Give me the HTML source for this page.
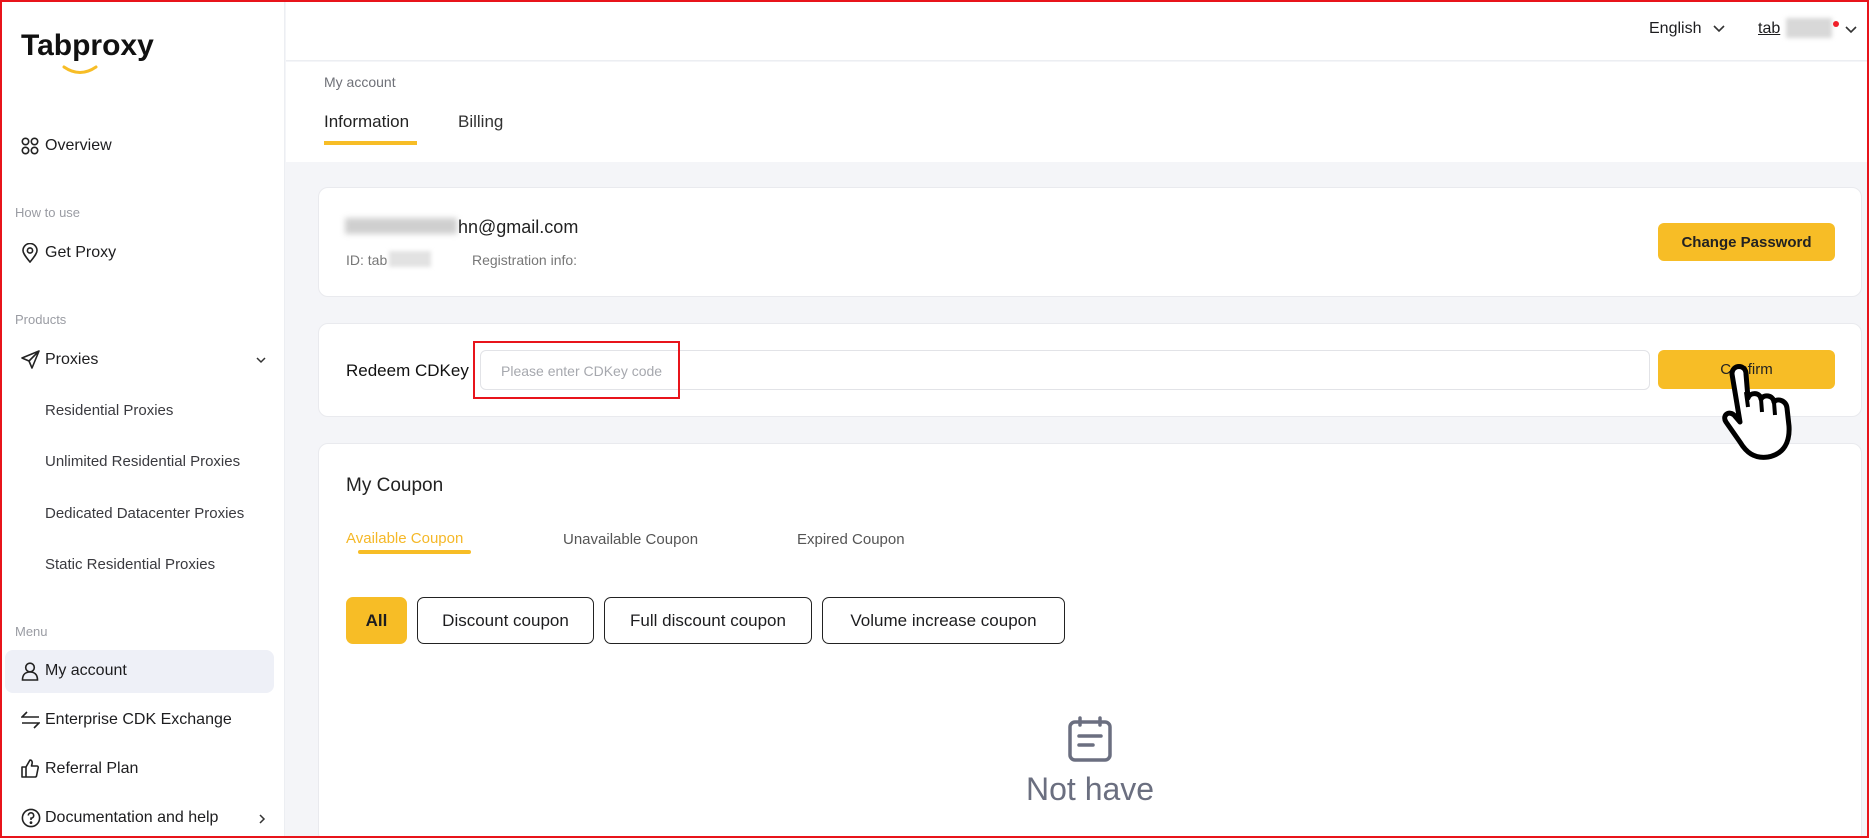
<!DOCTYPE html>
<html><head><meta charset="utf-8"><style>
*{box-sizing:border-box;margin:0;padding:0}
html{width:1869px;height:838px;overflow:hidden}
body{width:1869px;height:838px;overflow:hidden;font-family:"Liberation Sans",sans-serif;color:#1d1d1f;background:#f4f5f8;position:relative}
.frame{position:absolute;left:0;top:0;width:1869px;height:838px;border:2px solid #e8141b;z-index:50;pointer-events:none}
.side{position:absolute;left:0;top:0;width:285px;height:838px;background:#fff;border-right:1px solid #eceef2}
.a{position:absolute;white-space:nowrap}
.nav{font-size:16px;color:#1d1d1f;left:45px}
.sub{font-size:15px;color:#3a3a3f;left:45px}
.lbl{font-size:13px;color:#9a9ca3;left:15px}
.ic{position:absolute;left:21px}
.top{position:absolute;left:286px;top:0;right:0;height:61px;background:#fff;border-bottom:1px solid #eceef2}
.head{position:absolute;left:286px;top:62px;right:0;height:100px;background:#fff}
.card{position:absolute;left:318px;width:1544px;background:#fff;border-radius:10px;border:1px solid #e9eaee}
.btn{position:absolute;background:#f7bd26;border-radius:6px;font-size:15px;font-weight:bold;color:#222;display:flex;align-items:center;justify-content:center}
.fb{position:absolute;top:597px;height:47px;border:1px solid #222;border-radius:7px;font-size:17px;display:flex;align-items:center;justify-content:center;background:#fff}
</style></head><body>
<div class="frame"></div>
<div class="side">
 <div class="a" style="left:21px;top:29px;font-size:30px;font-weight:bold;color:#111">Tabproxy</div>
 <svg class="a" style="left:60px;top:64px" width="40" height="12"><path d="M4 3 Q20 14 36 3" stroke="#f7bd26" stroke-width="3" fill="none" stroke-linecap="round"/></svg>
 <svg class="ic" style="top:137px" width="18" height="18" fill="none" stroke="#222" stroke-width="1.6"><circle cx="4.5" cy="4.5" r="3.2"/><circle cx="13.5" cy="4.5" r="3.2"/><circle cx="4.5" cy="13.5" r="3.2"/><circle cx="13.5" cy="13.5" r="3.2"/></svg>
 <div class="a nav" style="top:137px">Overview</div>
 <div class="a lbl" style="top:205px">How to use</div>
 <svg class="ic" style="top:243px" width="18" height="20" fill="none" stroke="#222" stroke-width="1.6"><path d="M9 19 C4 13 2 10 2 7.5 A7 7 0 0 1 16 7.5 C16 10 14 13 9 19Z"/><circle cx="9" cy="7.5" r="2.6"/></svg>
 <div class="a nav" style="top:244px">Get Proxy</div>
 <div class="a lbl" style="top:312px">Products</div>
 <svg class="ic" style="top:350px" width="19" height="19" fill="none" stroke="#222" stroke-width="1.6" stroke-linejoin="round"><path d="M18 1 L1 8 L8 11 L11 18 Z M8 11 L18 1"/></svg>
 <div class="a nav" style="top:351px">Proxies</div>
 <svg class="a" style="left:256px;top:356px" width="10" height="8" fill="none" stroke="#333" stroke-width="1.5"><path d="M1 2 L5 6 L9 2"/></svg>
 <div class="a sub" style="top:402px">Residential Proxies</div>
 <div class="a sub" style="top:453px">Unlimited Residential Proxies</div>
 <div class="a sub" style="top:505px">Dedicated Datacenter Proxies</div>
 <div class="a sub" style="top:556px">Static Residential Proxies</div>
 <div class="a lbl" style="top:624px">Menu</div>
 <div class="a" style="left:5px;top:650px;width:269px;height:43px;background:#eef0f7;border-radius:8px"></div>
 <svg class="ic" style="top:662px" width="18" height="19" fill="none" stroke="#222" stroke-width="1.6"><circle cx="9" cy="5.5" r="4.3"/><path d="M1.5 18 C1.5 12 5 10 9 10 C13 10 16.5 12 16.5 18 Z"/></svg>
 <div class="a nav" style="top:662px">My account</div>
 <svg class="ic" style="top:711px" width="19" height="18" fill="none" stroke="#222" stroke-width="1.6"><path d="M6 1 L1 6 H18 M13 17 L18 12 H1"/></svg>
 <div class="a nav" style="top:711px">Enterprise CDK Exchange</div>
 <svg class="ic" style="top:759px" width="18" height="19" fill="none" stroke="#222" stroke-width="1.6" stroke-linejoin="round"><path d="M1 8 H5 V18 H1 Z M5 8 L9 1 C11 1 11.5 3 11 5 L10.5 7 H16 C17 7 17.5 8 17 9.5 L15.5 17 C15.3 17.7 14.8 18 14 18 H5"/></svg>
 <div class="a nav" style="top:760px">Referral Plan</div>
 <svg class="ic" style="top:808px" width="20" height="20" fill="none" stroke="#222" stroke-width="1.6"><circle cx="10" cy="10" r="8.6"/><path d="M7.3 7.5 A2.7 2.7 0 1 1 10 10.2 V12"/><circle cx="10" cy="14.6" r=".6" fill="#222"/></svg>
 <div class="a nav" style="top:809px">Documentation and help</div>
 <svg class="a" style="left:258px;top:814px" width="8" height="10" fill="none" stroke="#333" stroke-width="1.5"><path d="M2 1 L6 5 L2 9"/></svg>
</div>
<div class="top">
 <div class="a" style="left:1363px;top:20px;font-size:16px">English</div>
 <svg class="a" style="left:1427px;top:25px" width="12" height="8" fill="none" stroke="#333" stroke-width="1.6"><path d="M1 1 L6 6 L11 1"/></svg>
 <div class="a" style="left:1472px;top:20px;font-size:16px;text-decoration:underline">tab</div>
 <div class="a" style="left:1500px;top:18px;width:46px;height:20px;background:#d8d8d8;filter:blur(2px)"></div>
 <div class="a" style="left:1547px;top:21px;width:6px;height:6px;border-radius:50%;background:#f0202a"></div>
 <svg class="a" style="left:1559px;top:26px" width="12" height="8" fill="none" stroke="#333" stroke-width="1.6"><path d="M1 1 L6 6 L11 1"/></svg>
</div>
<div class="head">
 <div class="a" style="left:38px;top:12px;font-size:14px;color:#6f7178">My account</div>
 <div class="a" style="left:38px;top:50px;font-size:17px;color:#222">Information</div>
 <div class="a" style="left:38px;top:79px;width:93px;height:4px;background:#f7bd26"></div>
 <div class="a" style="left:172px;top:50px;font-size:17px;color:#333">Billing</div>
</div>
<div class="card" style="top:187px;height:110px">
 <div class="a" style="left:26px;top:30px;width:112px;height:16px;background:#cfcfcf;filter:blur(3px)"></div>
 <div class="a" style="left:139px;top:29px;font-size:18px;color:#222">hn@gmail.com</div>
 <div class="a" style="left:27px;top:64px;font-size:14px;color:#777">ID: tab</div>
 <div class="a" style="left:70px;top:63px;width:42px;height:16px;background:#e2e2e2;filter:blur(2px)"></div>
 <div class="a" style="left:153px;top:64px;font-size:14px;color:#777">Registration info:</div>
</div>
<div class="btn" style="left:1658px;top:223px;width:177px;height:38px">Change Password</div>
<div class="card" style="top:323px;height:94px">
 <div class="a" style="left:27px;top:37px;font-size:17px;color:#111">Redeem CDKey</div>
 <div class="a" style="left:161px;top:26px;width:1170px;height:40px;border:1px solid #e2e3e7;border-radius:6px"></div>
 <div class="a" style="left:182px;top:39px;font-size:14px;color:#a6a8ae">Please enter CDKey code</div>
 <div class="a" style="left:154px;top:17px;width:207px;height:58px;border:2px solid #e8141b"></div>
</div>
<div class="btn" style="left:1658px;top:350px;width:177px;height:39px;font-weight:normal;font-size:15px">Confirm</div>
<svg class="a" style="left:1718px;top:362px;z-index:20" width="82" height="98" viewBox="0 0 82 98"><path d="M14 12 C14 2 28 2 28 12 L30 36 C32 30 42 30 43 37 C46 32 55 33 56 40 C59 36 68 38 69 46 L71 64 C72 80 66 92 50 95 C36 97 28 90 22 80 L8 60 C4 54 10 48 16 53 L22 60 Z" fill="#fff" stroke="#000" stroke-width="5" stroke-linejoin="round"/><path d="M28 30 L30 45 M43 37 L44 50 M56 40 L57 53" stroke="#000" stroke-width="4"/></svg>
<div class="card" style="top:443px;height:400px">
 <div class="a" style="left:27px;top:31px;font-size:19px;color:#222">My Coupon</div>
 <div class="a" style="left:27px;top:86px;font-size:15px;color:#f5b828">Available Coupon</div>
 <div class="a" style="left:39px;top:106px;width:113px;height:4px;border-radius:2px;background:#f7bd26"></div>
 <div class="a" style="left:244px;top:87px;font-size:15px;color:#555">Unavailable Coupon</div>
 <div class="a" style="left:478px;top:87px;font-size:15px;color:#555">Expired Coupon</div>
 <svg class="a" style="left:748px;top:272px" width="48" height="48" fill="none" stroke="#6b6f80" stroke-width="3.5" stroke-linecap="round"><rect x="3" y="6" width="40" height="38" rx="5"/><path d="M13 2 V9 M33 2 V9 M12 20 H34 M12 29 H26"/></svg>
 <div class="a" style="left:707px;top:327px;font-size:32px;color:#6b6f80">Not have</div>
</div>
<div class="fb" style="left:346px;width:61px;background:#f7bd26;border-color:#f7bd26;font-weight:bold">All</div>
<div class="fb" style="left:417px;width:177px">Discount coupon</div>
<div class="fb" style="left:604px;width:208px">Full discount coupon</div>
<div class="fb" style="left:822px;width:243px">Volume increase coupon</div>
</body></html>
